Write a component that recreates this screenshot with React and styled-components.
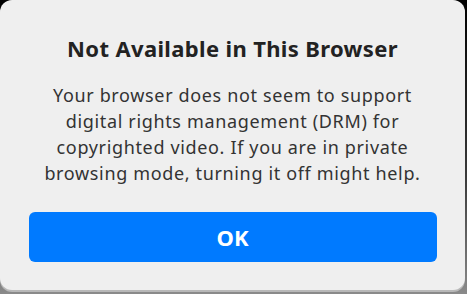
import React from "react";
import styled, { createGlobalStyle } from "styled-components";

const Global = createGlobalStyle`
  html, body { margin: 0; padding: 0; }
  body {
    width: 467px;
    height: 294px;
    overflow: hidden;
    background: linear-gradient(180deg, #000 0%, #3a3a3a 60%, #8a8a8a 100%);
    font-family: "Noto Sans", "Open Sans", sans-serif;
  }
`;

const Dialog = styled.div`
  box-sizing: border-box;
  width: 465px;
  height: 290px;
  background: #efefef;
  border-radius: 12px;
  display: flex;
  flex-direction: column;
  align-items: center;
  padding: 33px 29px 0 29px;
  box-shadow: 0 2px 0 #b8b8b8;
`;

const Title = styled.h1`
  margin: 0;
  font-size: 22px;
  font-weight: 700;
  letter-spacing: 0.35px;
  line-height: 30px;
  color: #222;
  text-align: center;
`;

const Message = styled.p`
  margin: 19px 0 0 0;
  font-size: 18px;
  font-weight: 400;
  letter-spacing: 0.65px;
  line-height: 26px;
  color: #333;
  text-align: center;
`;

const Button = styled.button`
  margin-top: 26px;
  width: 408px;
  height: 50px;
  border: none;
  border-radius: 6px;
  background: #007aff;
  color: #fff;
  font-family: "Noto Sans", "Open Sans", sans-serif;
  font-size: 22px;
  font-weight: 700;
  cursor: pointer;
`;

export default function App() {
  return (
    <>
      <Global />
      <Dialog>
        <Title>Not Available in This Browser</Title>
        <Message>
          Your browser does not seem to support
          <br />
          digital rights management (DRM) for
          <br />
          copyrighted video. If you are in private
          <br />
          browsing mode, turning it off might help.
        </Message>
        <Button>OK</Button>
      </Dialog>
    </>
  );
}
